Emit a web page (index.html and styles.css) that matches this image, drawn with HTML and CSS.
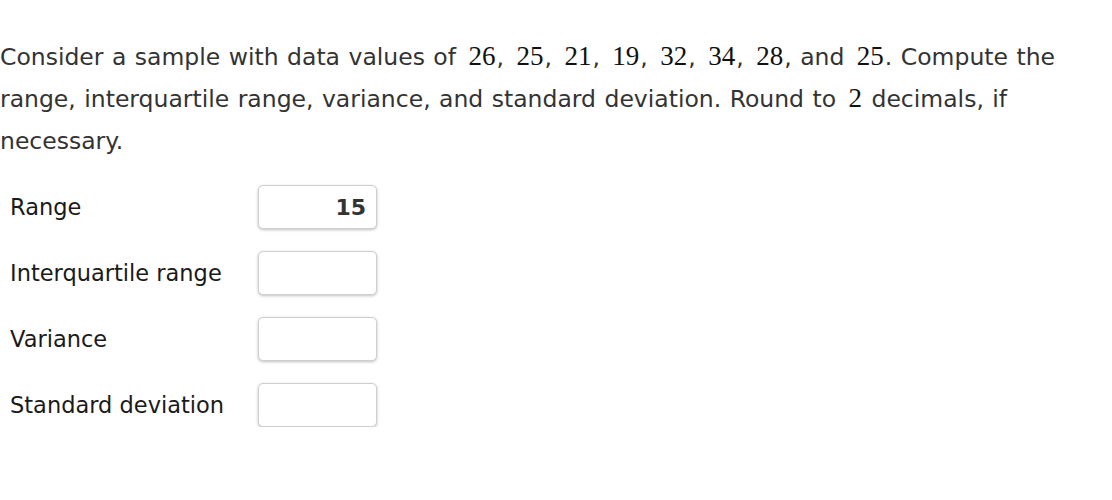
FILE: index.html
```html
<!DOCTYPE html>
<html>
<head>
<meta charset="utf-8">
<link rel="stylesheet" href="styles.css">
</head>
<body>
<div class="page">
  <p class="question">Consider a sample with data values of <span class="m">26</span>, <span class="m">25</span>, <span class="m">21</span>, <span class="m">19</span>, <span class="m">32</span>, <span class="m">34</span>, <span class="m">28</span>, and <span class="m">25</span>. Compute the range, interquartile range, variance, and standard deviation. Round to <span class="m">2</span> decimals, if necessary.</p>
  <div class="answers">
    <div class="label">Range</div>
    <div class="box filled">15</div>
    <div class="label">Interquartile range</div>
    <div class="box"></div>
    <div class="label">Variance</div>
    <div class="box"></div>
    <div class="label">Standard deviation</div>
    <div class="box"></div>
  </div>
</div>
</body>
</html>
```
FILE: styles.css
```css
html, body {
  margin: 0;
  padding: 0;
  background: #fff;
}
.page {
  padding-top: 36px;
  font-family: "DejaVu Sans", Verdana, sans-serif;
}
.question {
  margin: 0;
  max-width: 1085px;
  font-size: 23.5px;
  line-height: 42px;
  word-spacing: 1px;
  color: #333;
}
.m {
  font-family: "Liberation Serif", "Times New Roman", serif;
  font-size: 27px;
  line-height: 1;
  margin: 0 1px 0 4px;
  color: #111;
}
.answers {
  margin-top: 23px;
  padding-left: 10px;
  display: grid;
  grid-template-columns: 228px 119px;
  column-gap: 20px;
  row-gap: 22px;
  align-items: center;
}
.label {
  font-size: 22.5px;
  color: #1a1a1a;
}
.box {
  box-sizing: border-box;
  height: 44px;
  border: 1px solid #cfcfcf;
  border-radius: 5px;
  box-shadow: 0 1px 3px rgba(0,0,0,0.25);
  background: #fff;
}
.filled {
  display: flex;
  align-items: center;
  justify-content: flex-end;
  padding-right: 10px;
  font-weight: bold;
  font-size: 22px;
  color: #333;
}
```
